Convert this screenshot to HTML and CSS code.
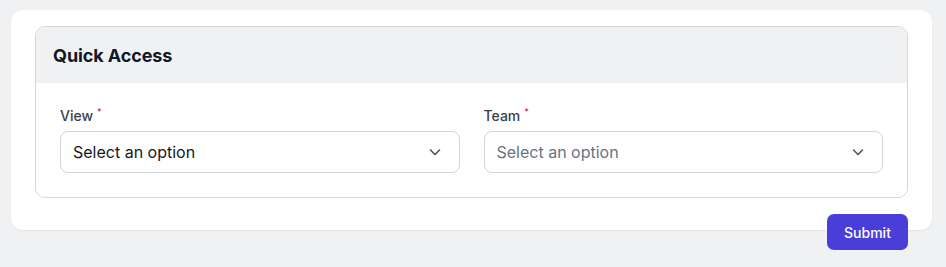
FILE: index.html
```html
<!DOCTYPE html>
<html>
<head>
<meta charset="utf-8">
<link rel="stylesheet" href="styles.css">
</head>
<body>
<div class="card">
  <section class="section">
    <header class="section-head"><h2 class="title">Quick Access</h2></header>
    <div class="section-body">
      <div class="field">
        <label class="label">View<sup class="req">*</sup></label>
        <div class="select">
          <span class="value">Select an option</span>
          <svg class="chev" width="20" height="20" viewBox="0 0 20 20"><path d="M5.5 8l4.5 4.5L14.5 8" fill="none" stroke="#4b5563" stroke-width="1.6" stroke-linecap="round" stroke-linejoin="round"/></svg>
        </div>
      </div>
      <div class="field">
        <label class="label">Team<sup class="req">*</sup></label>
        <div class="select">
          <span class="value placeholder">Select an option</span>
          <svg class="chev" width="20" height="20" viewBox="0 0 20 20"><path d="M5.5 8l4.5 4.5L14.5 8" fill="none" stroke="#4b5563" stroke-width="1.6" stroke-linecap="round" stroke-linejoin="round"/></svg>
        </div>
      </div>
    </div>
  </section>
  <div class="actions"><button class="btn">Submit</button></div>
</div>
</body>
</html>
```
FILE: styles.css
```css
html, body { margin: 0; }
body {
  background: #f0f1f3;
  font-family: Inter, "Noto Sans", sans-serif;
  padding: 10px 14px 0 11px;
  height: 267px;
  box-sizing: border-box;
}
.card {
  background: #fff;
  border-radius: 12px;
  padding: 16px 24px 0 24px;
  height: 220px;
  box-sizing: border-box;
  box-shadow: 0 1px 2px rgba(0,0,0,0.06);
}
.section {
  border: 1px solid #d4d6db;
  border-radius: 10px;
  overflow: hidden;
}
.section-head {
  background: #f0f1f3;
  height: 56px;
  display: flex;
  align-items: center;
  padding: 0 17px;
}
.title {
  margin: 0;
  font-size: 18px;
  font-weight: 700;
  color: #111827;
  letter-spacing: -0.1px;
}
.section-body {
  display: grid;
  grid-template-columns: 1fr 1fr;
  gap: 24px;
  padding: 23px 24px 24px 24px;
  background: #fff;
}
.field { display: flex; flex-direction: column; }
.label {
  font-size: 14px;
  font-weight: 500;
  color: #374151;
  line-height: 20px;
  margin-bottom: 5px;
}
.req {
  color: #e11d48;
  font-size: 9px;
  margin-left: 4px;
  vertical-align: 6px;
  line-height: 0;
}
.select {
  height: 42px;
  box-sizing: border-box;
  border: 1px solid #d1d5db;
  border-radius: 8px;
  display: flex;
  align-items: center;
  justify-content: space-between;
  padding: 0 16px 0 12px;
}
.value { font-size: 16px; color: #111827; }
.value.placeholder { color: #6b7280; }
.chev { flex: none; margin-right: -2px; }
.actions {
  display: flex;
  justify-content: flex-end;
  margin-top: 16px;
}
.btn {
  width: 81px;
  height: 36px;
  border: none;
  border-radius: 7px;
  background: #4a3edb;
  color: #fff;
  font-family: Inter, sans-serif;
  font-size: 14px;
  font-weight: 500;
}
```
